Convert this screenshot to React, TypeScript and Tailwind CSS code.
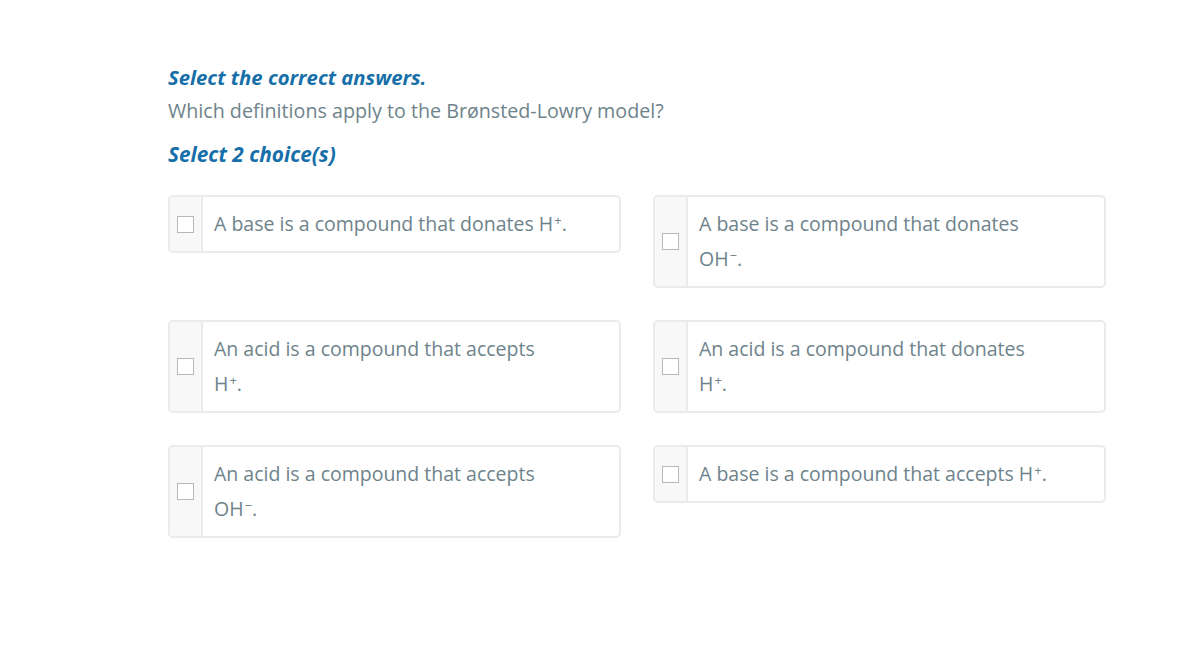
import { ReactNode } from "react";

type Choice = {
  id: string;
  text: ReactNode;
};

const H = <>H<sup className="text-[13px] ml-[1px]">+</sup></>;
const OH = <>OH<sup className="text-[13px] ml-[1px]">−</sup></>;

const choices: Choice[] = [
  { id: "a", text: <>A base is a compound that donates {H}.</> },
  { id: "b", text: <>A base is a compound that donates<br />{OH}.</> },
  { id: "c", text: <>An acid is a compound that accepts<br />{H}.</> },
  { id: "d", text: <>An acid is a compound that donates<br />{H}.</> },
  { id: "e", text: <>An acid is a compound that accepts<br />{OH}.</> },
  { id: "f", text: <>A base is a compound that accepts {H}.</> },
];

function ChoiceCard({ text }: { text: ReactNode }) {
  return (
    <label className="flex min-h-[58px] border-2 border-[#ebebeb] rounded-[5px] bg-white cursor-pointer">
      <span className="w-[33px] shrink-0 flex items-center justify-center bg-[#f8f8f8] border-r-2 border-[#ebebeb] rounded-l-[4px]">
        <span className="w-[17px] h-[17px] border-[1.5px] border-[#b8b8b8] bg-white" />
      </span>
      <span className="self-center pl-[11px] pr-4 pt-[9px] pb-[10px] leading-[35px] text-[19.5px] text-[#6e838b]">
        {text}
      </span>
    </label>
  );
}

export default function App() {
  return (
    <div className="min-h-[666px] bg-white" style={{ fontFamily: '"Open Sans", "Noto Sans", sans-serif' }}>
      <div className="w-[938px] ml-[168px] pt-[63px]">
        <h2 className="text-[20.3px] font-bold italic text-[#166fa8] leading-[28px]">Select the correct answers.</h2>
        <p className="mt-[6px] text-[19.7px] text-[#6e838b] leading-[28px]">
          Which definitions apply to the Brønsted-Lowry model?
        </p>
        <p className="mt-[15px] text-[20.8px] font-bold italic text-[#166fa8] leading-[28px]">Select 2 choice(s)</p>

        <div className="mt-[27px] grid grid-cols-2 gap-x-[32px] gap-y-[32px] items-start">
          {choices.map((c) => (
            <ChoiceCard key={c.id} text={c.text} />
          ))}
        </div>
      </div>
    </div>
  );
}
